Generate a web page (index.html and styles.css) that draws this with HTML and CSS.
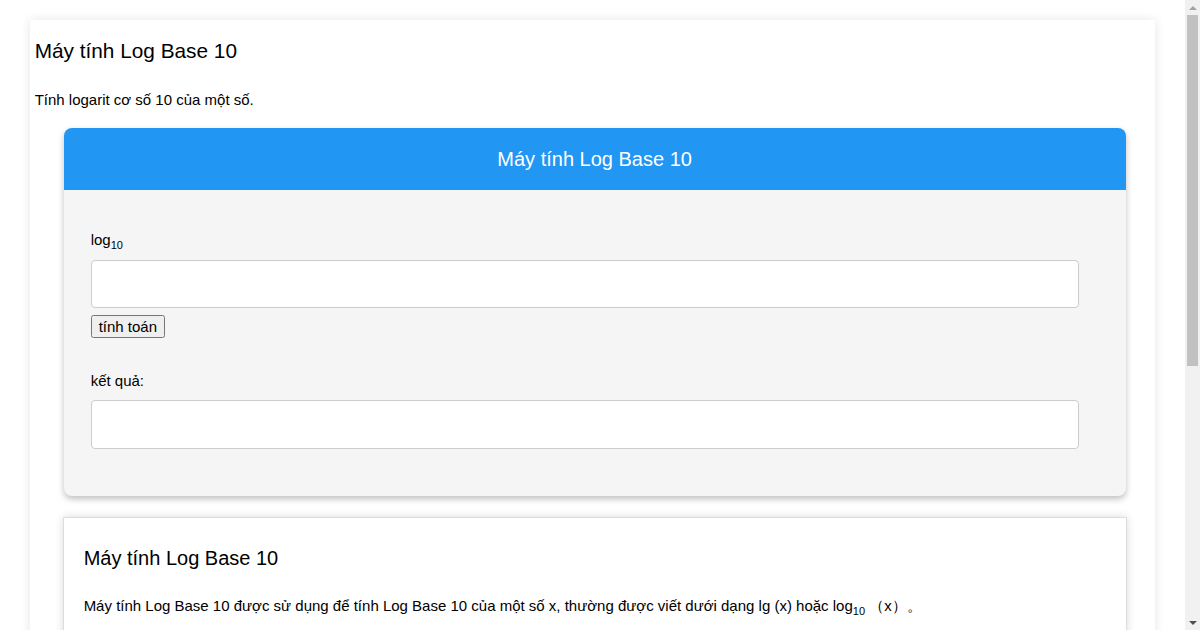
FILE: index.html
```html
<!DOCTYPE html>
<html lang="vi">
<head>
<meta charset="utf-8">
<title>Máy tính Log Base 10</title>
<link rel="stylesheet" href="styles.css">
</head>
<body>
<div class="page">
  <h1 class="page-title">Máy tính Log Base 10</h1>
  <p class="page-lead">Tính logarit cơ số 10 của một số.</p>

  <div class="calc">
    <div class="calc-head">Máy tính Log Base 10</div>
    <div class="calc-body">
      <label class="calc-label">log<sub>10</sub></label>
      <input class="calc-input" type="text">
      <button class="calc-btn" type="button">tính toán</button>
      <label class="calc-label result-label">kết quả:</label>
      <input class="calc-input result-input" type="text">
    </div>
  </div>

  <div class="info">
    <h2 class="info-title">Máy tính Log Base 10</h2>
    <p class="info-text">Máy tính Log Base 10 được sử dụng để tính Log Base 10 của một số x, thường được viết dưới dạng lg (x) hoặc log<sub>10</sub> （x）。</p>
    <p class="info-text">Ví dụ: Log cơ số 10 của 100 là 2, vì 10<sup>2</sup> = 100.</p>
    <p class="info-text">Công thức: log<sub>10</sub>(x) = y khi và chỉ khi 10<sup>y</sup> = x.</p>
    <p class="info-text">Logarit cơ số 10 còn được gọi là logarit thập phân hoặc logarit thông thường.</p>
    <p class="info-text">Nhập một số dương vào ô phía trên và nhấn "tính toán" để xem kết quả.</p>
    <p class="info-text">Lưu ý: logarit chỉ xác định với các số lớn hơn 0.</p>
  </div>
</div>

<div class="scrollbar" aria-hidden="true">
  <div class="sb-btn"><span class="sb-arrow-up"></span></div>
  <div class="sb-track"><div class="sb-thumb"></div></div>
  <div class="sb-btn"><span class="sb-arrow-down"></span></div>
</div>
</body>
</html>
```

FILE: styles.css
```css
html, body {
  margin: 0;
  padding: 0;
  background: #fff;
}
body {
  font-family: "Liberation Sans", Arial, sans-serif;
  color: #000;
  margin-right: 15px;
}
.page {
  width: 95%;
  margin: 20px auto;
  padding: 5px 5px 30px;
  box-sizing: border-box;
  background: #fff;
  box-shadow: 0 0 10px rgba(0, 0, 0, 0.1);
}
.page-title {
  font-size: 20.8px;
  font-weight: normal;
  margin: 14px 0 0;
  line-height: 24px;
}
.page-lead {
  font-size: 15px;
  margin: 28px 0 0;
  line-height: 17px;
}
.calc {
  width: 1062px;
  margin: 20px 0 0 29px;
  border-radius: 8px;
  overflow: hidden;
  background: #f5f5f5;
  box-shadow: 0 3px 6px rgba(0, 0, 0, 0.25);
}
.calc-head {
  background: #2196f3;
  color: #fff;
  text-align: center;
  font-size: 20px;
  height: 62px;
  line-height: 62px;
}
.calc-body {
  padding: 41px 27px 47px;
  display: flex;
  flex-direction: column;
  align-items: flex-start;
}
.calc-label {
  font-size: 15px;
  line-height: 17px;
}
.calc-label sub {
  font-size: 11px;
  line-height: 0;
}
.result-label {
  margin-top: 34px;
}
.calc-input {
  width: 988px;
  height: 48px;
  box-sizing: border-box;
  border: 1px solid #ccc;
  border-radius: 4px;
  background: #fff;
  margin-top: 12px;
  font: 15px "Liberation Sans", Arial, sans-serif;
  padding: 0 10px;
}
.result-input {
  margin-top: 11px;
  height: 49px;
}
.calc-btn {
  margin-top: 7px;
  font: 15px "Liberation Sans", Arial, sans-serif;
  line-height: 17px;
}
.info {
  width: 1064px;
  margin: 21px 0 0 28px;
  box-sizing: border-box;
  border: 1px solid #ddd;
  background: #fff;
  padding: 28px 20px 20px;
  box-shadow: 0 0 8px rgba(0, 0, 0, 0.15);
}
.info-title {
  font-size: 20px;
  font-weight: normal;
  line-height: 24px;
  margin: 0;
}
.info-text {
  font-size: 15px;
  line-height: 17px;
  margin: 27px 0 0;
}
.info-text sub,
.info-text sup {
  font-size: 11px;
  line-height: 0;
}

/* simulated browser scrollbar overlaying the right edge */
.scrollbar {
  position: fixed;
  top: 0;
  right: 0;
  width: 15px;
  height: 100%;
  background: #f1f1f1;
  display: flex;
  flex-direction: column;
}
.sb-btn {
  height: 15px;
  display: flex;
  align-items: center;
  justify-content: center;
}
.sb-track {
  flex: 1;
  padding: 0 2px;
}
.sb-thumb {
  height: 351px;
  background: #c1c1c1;
}
.sb-arrow-up {
  width: 0;
  height: 0;
  border-left: 4px solid transparent;
  border-right: 4px solid transparent;
  border-bottom: 4px solid #a3a3a3;
}
.sb-arrow-down {
  width: 0;
  height: 0;
  border-left: 4px solid transparent;
  border-right: 4px solid transparent;
  border-top: 4px solid #505050;
}
```
